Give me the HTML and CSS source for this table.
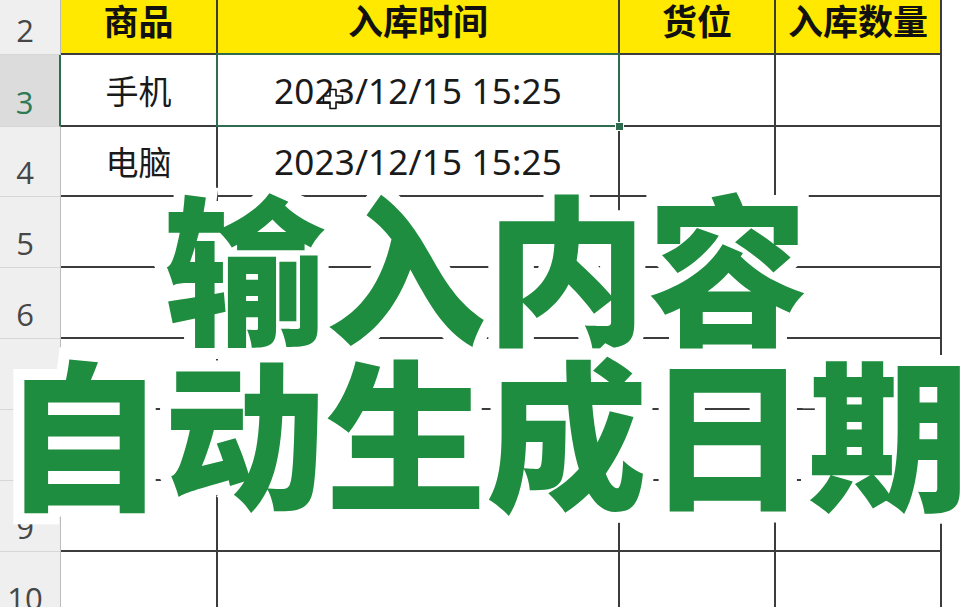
FILE: index.html
```html
<!DOCTYPE html>
<html lang="zh-CN">
<head>
<meta charset="utf-8">
<title>输入内容自动生成日期</title>
<link rel="stylesheet" href="styles.css">
</head>
<body>
<div class="stage">
  <div class="sheet">
    <div class="rh">2</div>
    <div class="cell head">商品</div>
    <div class="cell head">入库时间</div>
    <div class="cell head">货位</div>
    <div class="cell head">入库数量</div>

    <div class="rh sel">3</div>
    <div class="cell">手机</div>
    <div class="cell date active">2023/12/15 15:25<span class="handle"></span></div>
    <div class="cell"></div>
    <div class="cell"></div>

    <div class="rh">4</div>
    <div class="cell">电脑</div>
    <div class="cell date">2023/12/15 15:25</div>
    <div class="cell"></div>
    <div class="cell"></div>

    <div class="rh">5</div>
    <div class="cell"></div><div class="cell"></div><div class="cell"></div><div class="cell"></div>
    <div class="rh">6</div>
    <div class="cell"></div><div class="cell"></div><div class="cell"></div><div class="cell"></div>
    <div class="rh">7</div>
    <div class="cell"></div><div class="cell"></div><div class="cell"></div><div class="cell"></div>
    <div class="rh">8</div>
    <div class="cell"></div><div class="cell"></div><div class="cell"></div><div class="cell"></div>
    <div class="rh">9</div>
    <div class="cell"></div><div class="cell"></div><div class="cell"></div><div class="cell"></div>
    <div class="rh">10</div>
    <div class="cell"></div><div class="cell"></div><div class="cell"></div><div class="cell"></div>
  </div>

  <div class="title">
    <div class="line">输入内容</div>
    <div class="line">自动生成日期</div>
  </div>

  <svg class="cursor" width="24" height="24" viewBox="0 0 24 24">
    <path d="M8 1.5h6v6.5h6.5v6H14v6.5H8V14H1.5V8H8z" fill="#fff" stroke="#111" stroke-width="1.6" stroke-linejoin="round"/>
  </svg>
</div>
</body>
</html>
```

FILE: styles.css
```css
html, body {
  margin: 0;
  padding: 0;
  background: #ffffff;
  overflow: hidden;
}

.stage {
  position: relative;
  width: 972px;
  height: 607px;
  overflow: hidden;
  background: #ffffff;
}

.sheet {
  display: grid;
  grid-template-columns: 61px 157px 402px 156px 166px;
  grid-template-rows: 71px 72px 70px 71px 71px 71px 71px 71px 71px;
  margin-top: -16px;
  width: 942px;
  font-family: "Noto Sans", "Noto Sans CJK SC", sans-serif;
}

.rh {
  box-sizing: border-box;
  background: #efefef;
  border-bottom: 1px solid #d6d6d6;
  border-right: 1px solid #bcbcbc;
  display: flex;
  align-items: flex-end;
  justify-content: center;
  padding-bottom: 4px;
  padding-right: 10px;
  font-family: "Open Sans", "Liberation Sans", sans-serif;
  font-size: 31px;
  line-height: 40px;
  color: #474747;
}

.rh.sel {
  background: #dcdcdc;
  color: #2d7a55;
  border-right: 2px solid #2f6b4f;
}

.cell {
  box-sizing: border-box;
  position: relative;
  border-right: 2px solid #3c3c3c;
  border-bottom: 2px solid #3c3c3c;
  display: flex;
  align-items: center;
  justify-content: center;
  font-family: "Noto Sans CJK SC", sans-serif;
  font-size: 33px;
  color: #1a1a1a;
}

.cell.head {
  background: #ffe900;
  font-weight: 700;
  padding-top: 3px;
  font-size: 35px;
  line-height: 40px;
  color: #111;
}

.cell.date {
  font-family: "Noto Sans", "Noto Sans CJK SC", sans-serif;
  font-size: 35px;
  letter-spacing: 0.2px;
}

.cell.active {
  border-right-color: #2f6b4f;
  border-bottom-color: #2f6b4f;
}

.cell.active::before {
  content: "";
  position: absolute;
  left: -2px;
  top: -2px;
  right: -2px;
  bottom: -2px;
  border: 2px solid #2f6b4f;
  pointer-events: none;
}

.handle {
  position: absolute;
  right: -6px;
  bottom: -6px;
  width: 9px;
  height: 9px;
  background: #2f6b4f;
  border: 1px solid #ffffff;
  box-sizing: border-box;
  z-index: 2;
}

.title {
  position: absolute;
  left: 0;
  right: 0;
  top: 180px;
  text-align: center;
  font-family: "Noto Sans CJK SC", sans-serif;
  font-weight: 900;
  font-size: 161px;
  line-height: 165px;
  color: #1f8d3f;
  -webkit-text-stroke: 22px #ffffff;
  paint-order: stroke fill;
  letter-spacing: 0;
  white-space: nowrap;
  z-index: 3;
}

.cursor {
  position: absolute;
  left: 322px;
  top: 88px;
  z-index: 4;
}
```
